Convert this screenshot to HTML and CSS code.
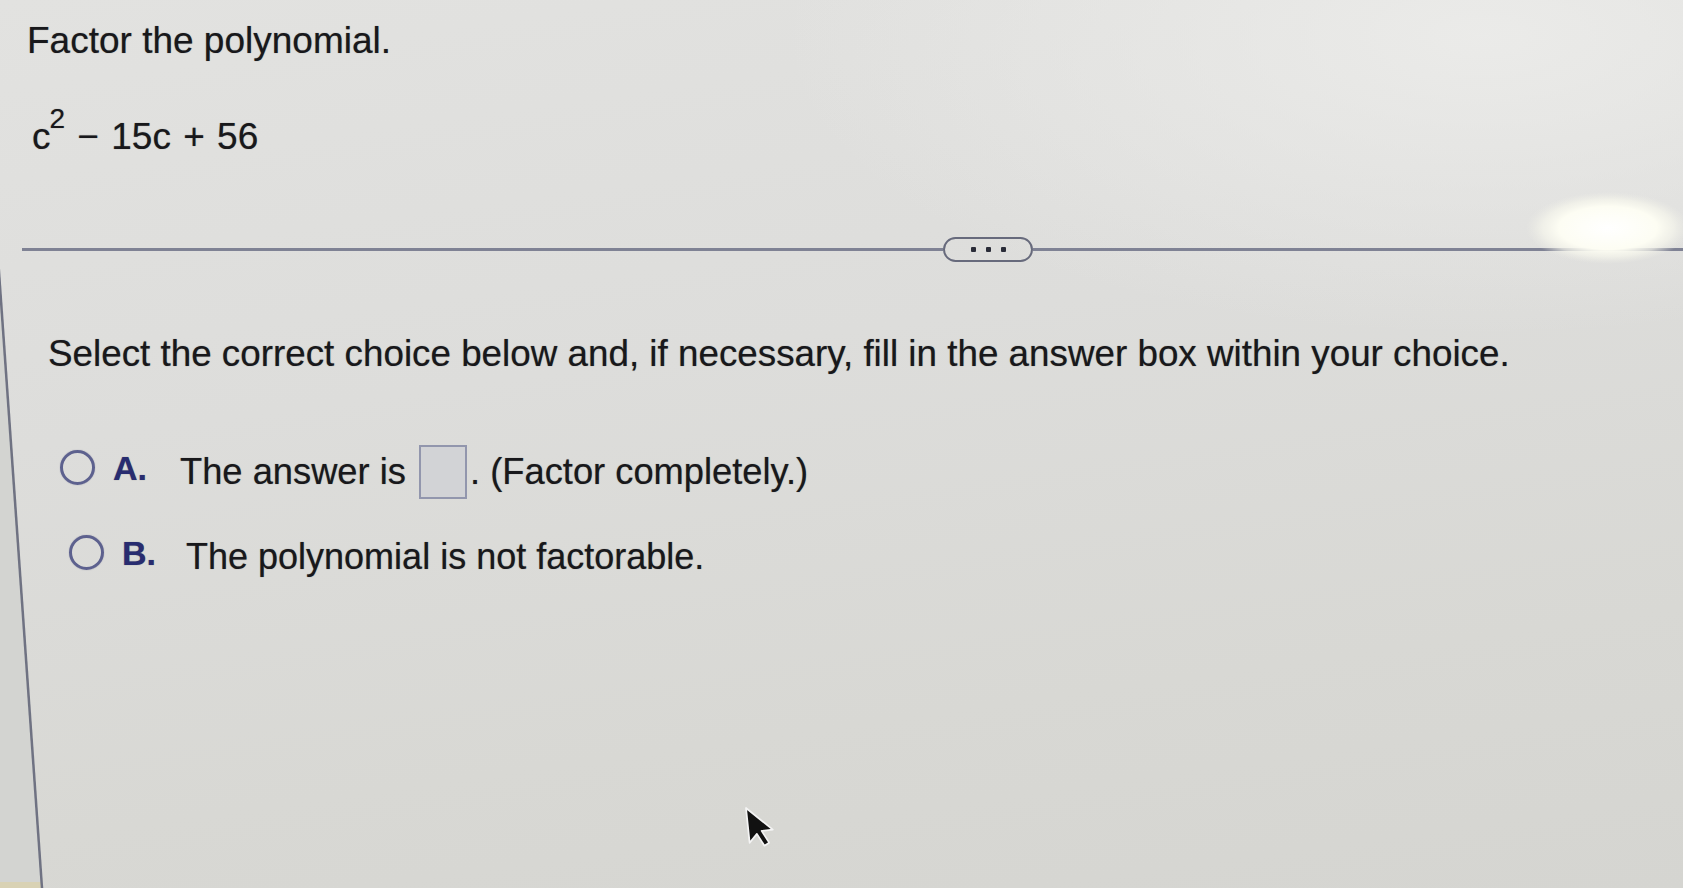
FILE: index.html
```html
<!DOCTYPE html>
<html lang="en">
<head>
<meta charset="utf-8">
<title>Factor the polynomial</title>
<link rel="stylesheet" href="styles.css">
</head>
<body>
<div class="page">
  <div class="question">
    <p class="prompt">Factor the polynomial.</p>
    <p class="expr">c<span class="sup">2</span> − 15c + 56</p>
  </div>

  <div class="divider">
    <span class="line line-left"></span>
    <span class="more" aria-label="more"><i class="dot"></i><i class="dot"></i><i class="dot"></i></span>
    <span class="line line-right"></span>
  </div>

  <div class="answer">
    <p class="instr">Select the correct choice below and, if necessary, fill in the answer box within your choice.</p>
    <div class="choices">
      <div class="choice choice-a">
        <span class="radio"></span>
        <span class="letter">A.</span>
        <span class="text">The answer is <span class="box"></span>. (Factor completely.)</span>
      </div>
      <div class="choice choice-b">
        <span class="radio"></span>
        <span class="letter">B.</span>
        <span class="text">The polynomial is not factorable.</span>
      </div>
    </div>
  </div>

  <svg class="photo-overlay" width="1683" height="888" viewBox="0 0 1683 888" aria-hidden="true">
    <defs>
      <radialGradient id="glare" cx="50%" cy="50%" r="50%">
        <stop offset="0%" stop-color="#ffffff" stop-opacity="1"/>
        <stop offset="60%" stop-color="#fdfdf3" stop-opacity="1"/>
        <stop offset="80%" stop-color="#f6f6ec" stop-opacity="0.7"/>
        <stop offset="100%" stop-color="#eeeee6" stop-opacity="0"/>
      </radialGradient>
    </defs>
    <polygon points="0,0 -20,0 42,888 0,888" fill="#d3d4d1"/>
    <polygon points="0,882 41.5,882 42,888 0,888" fill="#d9d2b4"/>
    <line x1="-20" y1="0" x2="42" y2="888" stroke="#6f7282" stroke-width="2.5"/>
    <ellipse cx="1608" cy="228" rx="82" ry="36" fill="url(#glare)"/>
    <g transform="translate(746 808) rotate(-6) scale(1.25)">
      <path d="M0 0 L0 28 L6.5 21.5 L11.5 31.5 L15.5 29.5 L10.5 19.5 L19.5 19.5 Z" fill="#111" stroke="#f4f4f4" stroke-width="1.4" stroke-linejoin="round"/>
    </g>
  </svg>
</div>
</body>
</html>
```

FILE: styles.css
```css
html, body {
  margin: 0;
  padding: 0;
}

body {
  background: #dcdcd9;
}

.page {
  position: relative;
  width: 1683px;
  height: 888px;
  overflow: hidden;
  font-family: "Liberation Sans", Arial, sans-serif;
  color: #18181b;
  text-shadow: 0 0 1px rgba(0, 0, 0, 0.45);
  background:
    radial-gradient(ellipse 700px 300px at 88% 4%, rgba(236, 236, 234, 0.9) 0%, rgba(236, 236, 234, 0) 100%),
    linear-gradient(172deg, #e2e2e0 0%, #dddddb 40%, #d8d8d4 75%, #d5d5d1 100%);
}

.question {
  padding: 20px 0 0 27px;
}

.prompt {
  margin: 0;
  font-size: 37px;
  line-height: 42px;
}

.expr {
  margin: 54px 0 0 5px;
  font-size: 37px;
  line-height: 42px;
  word-spacing: 2px;
}

.sup {
  font-size: 28px;
  line-height: 0;
  vertical-align: 21px;
  margin-left: -1px;
}

.divider {
  display: flex;
  align-items: center;
  margin: 79px 0 0 22px;
  height: 25px;
}

.line {
  height: 2.5px;
  background: #7f8294;
}

.line-left {
  width: 921px;
}

.line-right {
  flex: 1;
}

.more {
  box-sizing: border-box;
  width: 90px;
  height: 25px;
  border: 2.5px solid #676a7c;
  border-radius: 13px;
  display: flex;
  align-items: center;
  justify-content: center;
  gap: 10px;
}

.dot {
  display: block;
  width: 5px;
  height: 5px;
  border-radius: 1px;
  background: #2a2c38;
}

.answer {
  padding: 71px 0 0 48px;
}

.instr {
  margin: 0;
  font-size: 36.8px;
  line-height: 42px;
}

.choices {
  display: flex;
  flex-direction: column;
  gap: 29px;
  margin-top: 69px;
}

.choice {
  display: flex;
  align-items: flex-start;
  height: 56px;
}

.choice-a {
  padding-left: 12px;
}

.choice-b {
  padding-left: 21px;
}

.radio {
  box-sizing: border-box;
  flex: none;
  width: 35px;
  height: 35px;
  margin-top: 6px;
  border: 3.5px solid #5d618e;
  border-radius: 50%;
  box-shadow: 0 0 1px rgba(60, 60, 110, 0.5);
}

.letter {
  flex: none;
  width: 67px;
  margin-left: 18px;
  font-size: 34px;
  font-weight: bold;
  line-height: 48px;
  color: #282c70;
}

.choice-b .letter {
  width: 64px;
}

.text {
  font-size: 36px;
  line-height: 56px;
  white-space: nowrap;
}

.choice-a .text {
  font-size: 36.3px;
}

.box {
  display: inline-block;
  box-sizing: border-box;
  width: 48px;
  height: 54px;
  margin: 0 3px 0 3px;
  vertical-align: -15px;
  border: 2px solid #9296ad;
  background: #d2d3d6;
}

.photo-overlay {
  position: absolute;
  left: 0;
  top: 0;
  pointer-events: none;
}
```
